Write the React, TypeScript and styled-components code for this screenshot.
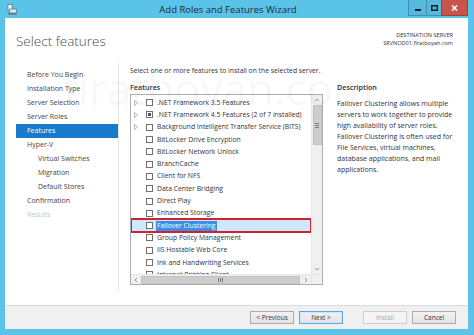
import styled, { createGlobalStyle } from 'styled-components';

const GlobalStyle = createGlobalStyle`
    html, body {
        margin: 0;
        padding: 0;
        background: #5bc3e8;
    }
    * {
        box-sizing: border-box;
    }
`

const Frame = styled.div`
    width: 474px;
    height: 335px;
    display: flex;
    flex-direction: column;
    padding: 0 6px 6px 5px;
    background: #5bc3e8;
    font-family: "Open Sans", "Noto Sans", sans-serif;
    color: #333;
    position: relative;
    overflow: hidden;
`

const TitleBar = styled.div`
    height: 18px;
    display: flex;
    align-items: center;
    position: relative;
`

const TitleIcon = styled.div`
    width: 10px;
    height: 11px;
    margin-left: 2px;
    display: flex;
`

const TitleText = styled.div`
    flex: 1;
    text-align: center;
    font-size: 9.5px;
    color: #1e2a30;
    padding-left: 30px;
`

const Controls = styled.div`
    display: flex;
    height: 16px;
    align-self: flex-start;
`

const CtrlButton = styled.div<{ $close?: boolean; $w: number }>`
    width: ${(p) => p.$w}px;
    height: 16px;
    display: flex;
    align-items: center;
    justify-content: center;
    background: ${(p) => (p.$close ? '#c9544a' : '#56b8dc')};
    border: 1px solid ${(p) => (p.$close ? '#a63f37' : '#3e8fb0')};
    border-top: none;
    margin-left: -1px;
`

const Win = styled.div`
    flex: 1;
    background: #fff;
    display: flex;
    flex-direction: column;
    position: relative;
    overflow: hidden;
`

const Watermark = styled.div`
    position: absolute;
    left: 58px;
    top: 40px;
    font-family: "Open Sans", sans-serif;
    font-size: 44px;
    color: rgba(0, 0, 0, 0.045);
    pointer-events: none;
    white-space: nowrap;
`

const Header = styled.div`
    height: 45px;
    display: flex;
    justify-content: space-between;
    padding: 0 15px 0 11px;
`

const PageTitle = styled.h1`
    margin: 0;
    padding-top: 14px;
    font-size: 13.5px;
    font-weight: 300;
    color: #4c4c4c;
`

const Destination = styled.div`
    padding-top: 14px;
    text-align: right;
    font-size: 5.6px;
    line-height: 7.5px;
    color: #333;
`

const Body = styled.div`
    flex: 1;
    display: flex;
`

const Nav = styled.div`
    width: 114px;
    padding: 5px 0 0 11px;
    margin-bottom: 14px;
    border-right: 1px solid #e3e3e3;
    display: flex;
    flex-direction: column;
`

const NavItem = styled.div<{ $active?: boolean; $indent?: boolean; $disabled?: boolean }>`
    height: 14px;
    line-height: 14px;
    font-size: 7px;
    padding-left: ${(p) => (p.$indent ? 22 : 11)}px;
    background: ${(p) => (p.$active ? '#1979ca' : 'transparent')};
    color: ${(p) => (p.$active ? '#fff' : p.$disabled ? '#c4c4c4' : '#444')};
`

const Main = styled.div`
    flex: 1;
    padding: 2px 0 0 11px;
    display: flex;
    flex-direction: column;
`

const Intro = styled.div`
    font-size: 6.8px;
    line-height: 11px;
    color: #333;
`

const Columns = styled.div`
    display: flex;
    gap: 14px;
    margin-top: 6px;
`

const Column = styled.div<{ $w: number }>`
    width: ${(p) => p.$w}px;
    display: flex;
    flex-direction: column;
`

const SectionLabel = styled.div`
    font-size: 7.2px;
    font-weight: 600;
    color: #333;
    line-height: 11px;
    margin-bottom: 1px;
`

const ListBox = styled.div`
    height: 191px;
    border: 1px solid #abadb3;
    display: grid;
    grid-template-columns: 1fr 11px;
    grid-template-rows: 1fr 10px;
`

const Rows = styled.div`
    overflow: hidden;
    padding-top: 1.5px;
`

const Row = styled.div<{ $selected?: boolean }>`
    height: 12.3px;
    display: flex;
    align-items: center;
    font-size: 6.8px;
    white-space: nowrap;
    color: #333;
    background: ${(p) => (p.$selected ? '#cde8ff' : 'transparent')};
    outline: ${(p) => (p.$selected ? '2px solid #d3202f' : 'none')};
    outline-offset: -1px;
`

const Expander = styled.div`
    width: 15px;
    padding-left: 3px;
    display: flex;
    align-items: center;
`

const Check = styled.div<{ $partial?: boolean }>`
    width: 7px;
    height: 7px;
    border: 1px solid #707070;
    background: #fff;
    margin-right: 4px;
    display: flex;
    align-items: center;
    justify-content: center;
    &::after {
        content: '';
        width: 3px;
        height: 3px;
        background: ${(p) => (p.$partial ? '#555' : 'transparent')};
    }
`

const RowText = styled.span<{ $selected?: boolean }>`
    background: ${(p) => (p.$selected ? '#3a8ee6' : 'transparent')};
    color: ${(p) => (p.$selected ? '#fff' : '#333')};
    padding: 0 1px;
    margin-left: -1px;
    line-height: 10px;
`

const VScroll = styled.div`
    background: #f0f0f0;
    border-left: 1px solid #e6e6e6;
    display: flex;
    flex-direction: column;
    align-items: center;
`

const HScroll = styled.div`
    background: #f0f0f0;
    border-top: 1px solid #e6e6e6;
    display: flex;
    align-items: center;
`

const Corner = styled.div`
    background: #f0f0f0;
    border-top: 1px solid #e6e6e6;
    border-left: 1px solid #e6e6e6;
`

const Arrow = styled.div`
    width: 10px;
    height: 10px;
    flex: none;
    display: flex;
    align-items: center;
    justify-content: center;
`

const Spacer = styled.div`
    flex: 1;
`

const Thumb = styled.div<{ $vertical?: boolean }>`
    background: #cdcdcd;
    border: 1px solid #c2c2c2;
    display: flex;
    align-items: center;
    justify-content: center;
    ${(p) => (p.$vertical ? 'width: 9px; height: 40px;' : 'height: 8px; flex: 1; margin-right: 1px;')}
`

const Grip = styled.div<{ $vertical?: boolean }>`
    display: flex;
    flex-direction: ${(p) => (p.$vertical ? 'column' : 'row')};
    gap: 1px;
    & > span {
        display: block;
        background: #7a7a7a;
        ${(p) => (p.$vertical ? 'width: 4px; height: 1px;' : 'width: 1px; height: 4px;')}
    }
`

const Description = styled.div`
    font-size: 7px;
    line-height: 11px;
    color: #333;
    margin-top: 4px;
    width: 124px;
`

const Footer = styled.div`
    height: 24px;
    background: #f0f0f0;
    border-top: 1px solid #dcdcdc;
    display: flex;
    align-items: center;
    justify-content: flex-end;
    padding: 0 12px 0 0;
`

const WizButton = styled.button<{ $default?: boolean; $gapLeft?: number }>`
    width: 44px;
    height: 13px;
    margin-left: ${(p) => p.$gapLeft ?? 5}px;
    padding: 0;
    font-family: "Open Sans", "Noto Sans", sans-serif;
    font-size: 6.5px;
    color: #333;
    background: linear-gradient(#f2f2f2, #e3e3e3);
    border: 1px solid ${(p) => (p.$default ? '#5fa7dd' : '#acacac')};
    box-shadow: ${(p) => (p.$default ? 'inset 0 0 0 1px #cfe6f8' : 'none')};
    &:disabled {
        color: #a8a8a8;
        background: #f4f4f4;
        border-color: #cfcfcf;
    }
`

const navItems: { label: string; active?: boolean; indent?: boolean; disabled?: boolean }[] = [
    { label: 'Before You Begin' },
    { label: 'Installation Type' },
    { label: 'Server Selection' },
    { label: 'Server Roles' },
    { label: 'Features', active: true },
    { label: 'Hyper-V' },
    { label: 'Virtual Switches', indent: true },
    { label: 'Migration', indent: true },
    { label: 'Default Stores', indent: true },
    { label: 'Confirmation' },
    { label: 'Results', disabled: true },
]

const features: { label: string; expand?: boolean; partial?: boolean; selected?: boolean }[] = [
    { label: '.NET Framework 3.5 Features', expand: true },
    { label: '.NET Framework 4.5 Features (2 of 7 installed)', expand: true, partial: true },
    { label: 'Background Intelligent Transfer Service (BITS)', expand: true },
    { label: 'BitLocker Drive Encryption' },
    { label: 'BitLocker Network Unlock' },
    { label: 'BranchCache' },
    { label: 'Client for NFS' },
    { label: 'Data Center Bridging' },
    { label: 'Direct Play' },
    { label: 'Enhanced Storage' },
    { label: 'Failover Clustering', selected: true },
    { label: 'Group Policy Management' },
    { label: 'IIS Hostable Web Core' },
    { label: 'Ink and Handwriting Services' },
    { label: 'Internet Printing Client' },
]

const Tri = () => (
    <svg width="4" height="6" viewBox="0 0 4 6">
        <path d="M0.5 0.5 L3.5 3 L0.5 5.5 Z" fill="none" stroke="#a6a6a6" strokeWidth="0.8" />
    </svg>
)

const Chevron = ({ dir }: { dir: 'up' | 'down' | 'left' | 'right' }) => {
    const d = {
        up: 'M1 4 L3 2 L5 4',
        down: 'M1 2 L3 4 L5 2',
        left: 'M4 1 L2 3 L4 5',
        right: 'M2 1 L4 3 L2 5',
    }[dir]
    return (
        <svg width="6" height="6" viewBox="0 0 6 6">
            <path d={d} fill="none" stroke="#8a8a8a" strokeWidth="0.9" />
        </svg>
    )
}

const App = () => {
    return (
        <>
            <GlobalStyle />
            <Frame>
                <TitleBar>
                    <TitleIcon>
                        <svg width="10" height="11" viewBox="0 0 10 11">
                            <rect x="1" y="0.5" width="4" height="6" fill="#fff" stroke="#5a6b75" strokeWidth="0.7" />
                            <rect x="2.5" y="5" width="7" height="4" fill="#dfe6ea" stroke="#5a6b75" strokeWidth="0.7" />
                            <rect x="1" y="9.3" width="8.5" height="1.2" fill="#5a6b75" />
                        </svg>
                    </TitleIcon>
                    <TitleText>Add Roles and Features Wizard</TitleText>
                    <Controls>
                        <CtrlButton $w={19}>
                            <svg width="6" height="6" viewBox="0 0 6 6"><rect x="0" y="4" width="6" height="2" fill="#10222b" /></svg>
                        </CtrlButton>
                        <CtrlButton $w={16}>
                            <svg width="7" height="6" viewBox="0 0 7 6"><rect x="0.75" y="0.75" width="5.5" height="4.5" fill="none" stroke="#10222b" strokeWidth="1.5" /></svg>
                        </CtrlButton>
                        <CtrlButton $w={27} $close>
                            <svg width="7" height="6" viewBox="0 0 7 6"><path d="M1 0.5 L6 5.5 M6 0.5 L1 5.5" stroke="#fff" strokeWidth="1.6" /></svg>
                        </CtrlButton>
                    </Controls>
                </TitleBar>
                <Win>
                    <Watermark>firatboyan.com</Watermark>
                    <Header>
                        <PageTitle>Select features</PageTitle>
                        <Destination>
                            DESTINATION SERVER
                            <br />
                            SRVNOD01.firatboyan.com
                        </Destination>
                    </Header>
                    <Body>
                        <Nav>
                            {navItems.map((item) => (
                                <NavItem key={item.label} $active={item.active} $indent={item.indent} $disabled={item.disabled}>
                                    {item.label}
                                </NavItem>
                            ))}
                        </Nav>
                        <Main>
                            <Intro>Select one or more features to install on the selected server.</Intro>
                            <Columns>
                                <Column $w={193}>
                                    <SectionLabel>Features</SectionLabel>
                                    <ListBox>
                                        <Rows>
                                            {features.map((f) => (
                                                <Row key={f.label} $selected={f.selected}>
                                                    <Expander>{f.expand ? <Tri /> : null}</Expander>
                                                    <Check $partial={f.partial} />
                                                    <RowText $selected={f.selected}>{f.label}</RowText>
                                                </Row>
                                            ))}
                                        </Rows>
                                        <VScroll>
                                            <Arrow><Chevron dir="up" /></Arrow>
                                            <Thumb $vertical>
                                                <Grip $vertical><span /><span /><span /></Grip>
                                            </Thumb>
                                            <Spacer />
                                            <Arrow><Chevron dir="down" /></Arrow>
                                        </VScroll>
                                        <HScroll>
                                            <Arrow><Chevron dir="left" /></Arrow>
                                            <Thumb>
                                                <Grip><span /><span /><span /></Grip>
                                            </Thumb>
                                            <Arrow><Chevron dir="right" /></Arrow>
                                        </HScroll>
                                        <Corner />
                                    </ListBox>
                                </Column>
                                <Column $w={128}>
                                    <SectionLabel>Description</SectionLabel>
                                    <Description>
                                        Failover Clustering allows multiple servers to work together to provide high availability of server roles.
                                        Failover Clustering is often used for File Services, virtual machines, database applications, and mail
                                        applications.
                                    </Description>
                                </Column>
                            </Columns>
                        </Main>
                    </Body>
                    <Footer>
                        <WizButton>&lt; Previous</WizButton>
                        <WizButton $default>Next &gt;</WizButton>
                        <WizButton $gapLeft={20} disabled>Install</WizButton>
                        <WizButton>Cancel</WizButton>
                    </Footer>
                </Win>
            </Frame>
        </>
    )
}

export default App
